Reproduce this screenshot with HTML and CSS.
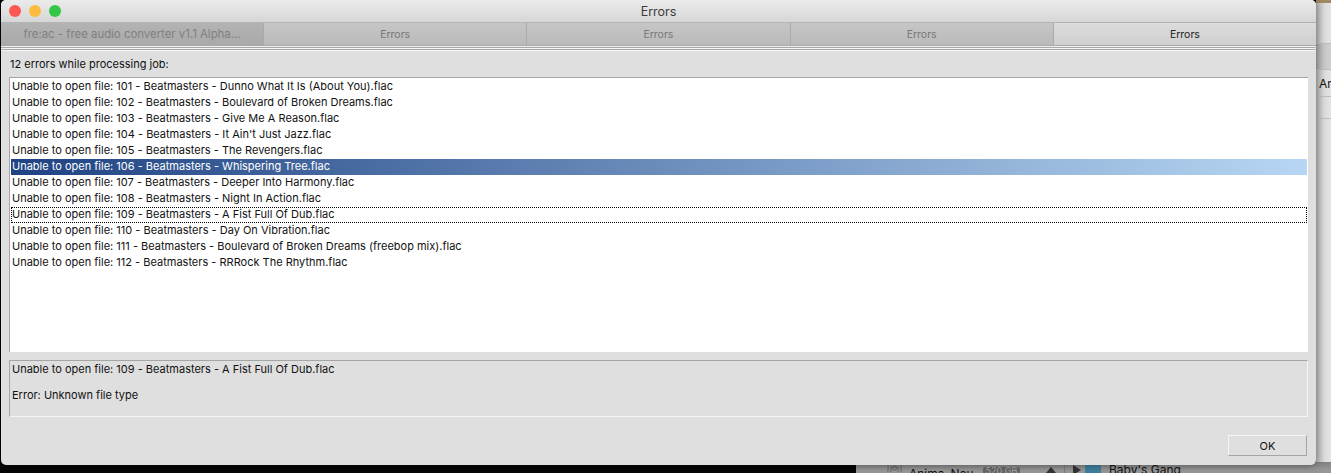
FILE: index.html
```html
<!DOCTYPE html>
<html lang="en">
<head>
<meta charset="utf-8">
<title>Errors</title>
<link rel="stylesheet" href="styles.css">
</head>
<body>
<div class="desktop">
  <div class="side-top"></div>
  <div class="side-row r1"></div>
  <div class="side-row r2"></div>
  <div class="side-row r3"><span>An</span></div>
  <div class="side-row r4"></div>
  <div class="side-row r5"></div>
  <div class="below">
    <svg class="disk" width="15" height="10" viewBox="0 0 15 10"><path d="M1 9V1h13v8M4 9V4h7v5" fill="none" stroke="#666" stroke-width="1"/><circle cx="7.500" cy="5" r="2" fill="none" stroke="#666"/></svg>
    <span class="b-name">Anima_Neu</span>
    <span class="b-size">520 GB</span>
    <span class="b-up"></span>
    <span class="b-sep"></span>
    <span class="b-play"></span>
    <span class="b-folder"></span>
    <span class="b-name2">Baby's Gang</span>
  </div>
</div>
<div class="window">
  <div class="titlebar">
    <div class="lights"><span class="light red"></span><span class="light yellow"></span><span class="light green"></span></div>
    <div class="title">Errors</div>
  </div>
  <div class="tabs">
    <div class="tab first">fre:ac - free audio converter v1.1 Alpha...</div>
    <div class="tab">Errors</div>
    <div class="tab">Errors</div>
    <div class="tab">Errors</div>
    <div class="tab active">Errors</div>
  </div>
  <div class="rule"></div>
  <div class="content">
    <div class="summary">12 errors while processing job:</div>
    <div class="list">
      <div class="row">Unable to open file: 101 - Beatmasters - Dunno What It Is (About You).flac</div>
      <div class="row">Unable to open file: 102 - Beatmasters - Boulevard of Broken Dreams.flac</div>
      <div class="row">Unable to open file: 103 - Beatmasters - Give Me A Reason.flac</div>
      <div class="row">Unable to open file: 104 - Beatmasters - It Ain't Just Jazz.flac</div>
      <div class="row">Unable to open file: 105 - Beatmasters - The Revengers.flac</div>
      <div class="row selected">Unable to open file: 106 - Beatmasters - Whispering Tree.flac</div>
      <div class="row">Unable to open file: 107 - Beatmasters - Deeper Into Harmony.flac</div>
      <div class="row">Unable to open file: 108 - Beatmasters - Night In Action.flac</div>
      <div class="row focused">Unable to open file: 109 - Beatmasters - A Fist Full Of Dub.flac</div>
      <div class="row">Unable to open file: 110 - Beatmasters - Day On Vibration.flac</div>
      <div class="row">Unable to open file: 111 - Beatmasters - Boulevard of Broken Dreams (freebop mix).flac</div>
      <div class="row">Unable to open file: 112 - Beatmasters - RRRock The Rhythm.flac</div>
    </div>
    <div class="details">
      <div>Unable to open file: 109 - Beatmasters - A Fist Full Of Dub.flac</div>
      <div class="details-error">Error: Unknown file type</div>
    </div>
    <div class="actions"><button class="ok">OK</button></div>
  </div>
</div>
</body>
</html>
```

FILE: styles.css
```css
* { box-sizing: border-box; }
html, body { margin: 0; height: 473px; overflow: hidden; }
body {
  background: #050505;
  padding-left: 1px;
  font-family: "Inter", "Liberation Sans", sans-serif;
  font-size: 11px;
  color: #111;
  position: relative;
}
.desktop { position: absolute; inset: 0; }
.side-top { position: absolute; left: 1316px; top: 0; width: 15px; height: 3px; background: #a08a64; }
.side-row {
  position: absolute;
  left: 1316px;
  width: 15px;
  background: linear-gradient(90deg, #b5b5b5, #dcdcdc 9px, #e4e4e4);
  border-bottom: 1px solid #bdbdbd;
  overflow: hidden;
  font-size: 12px;
  color: #111;
}
.side-row span { position: absolute; left: 3px; top: 6px; white-space: nowrap; }
.r1 { top: 3px; height: 41px; }
.r2 { top: 44px; height: 26px; background: linear-gradient(90deg, #a8a8a8, #c8c8c8 9px, #d0d0d0); }
.r3 { top: 70px; height: 27px; }
.r4 { top: 97px; height: 22px; }
.r5 { top: 119px; height: 354px; border-bottom: 0; }
.below {
  position: absolute;
  left: 856px;
  right: 0;
  top: 462px;
  height: 11px;
  background: linear-gradient(#808080, #979797 8px);
  overflow: hidden;
}
.below > * { position: absolute; }
.disk { left: 31px; top: 1px; }
.b-name { left: 53px; top: 4px; font-size: 12px; color: #111; white-space: nowrap; }
.b-size { left: 127px; top: 5px; width: 37px; height: 12px; background: #666; border-radius: 3px; color: #aaa; font-size: 9px; text-align: center; line-height: 8px; }
.b-up { left: 190px; top: 5px; border: 5px solid transparent; border-top: 0; border-bottom: 6px solid #333; }
.b-sep { left: 208px; top: 0; width: 1px; height: 11px; background: #7a7a7a; }
.b-play { left: 217px; top: 3px; border: 5px solid transparent; border-right: 0; border-left: 8px solid #333; }
.b-folder { left: 229px; top: 3px; width: 16px; height: 8px; background: #3f7f9f; }
.b-name2 { left: 253px; top: 0; font-size: 12px; color: #111; white-space: nowrap; }
.window {
  position: relative;
  width: 1315px;
  height: 465px;
  background: #dfdfdf;
  border-radius: 5px;
  overflow: hidden;
  display: flex;
  flex-direction: column;
  box-shadow: 0 0 9px rgba(0,0,0,.4);
}
.titlebar {
  height: 22px;
  background: linear-gradient(#ebebeb, #d6d6d6);
  display: flex;
  align-items: center;
  position: relative;
  flex: none;
}
.lights { display: flex; gap: 8px; padding-left: 8px; }
.light { width: 12px; height: 12px; border-radius: 50%; }
.red { background: #fc5753; }
.yellow { background: #fdbc40; }
.green { background: #33c748; }
.title {
  position: absolute;
  left: 0; right: 0;
  text-align: center;
  font-size: 12.5px;
  color: #3c3c3c;
}
.tabs {
  height: 24px;
  display: flex;
  flex: none;
  border-top: 1px solid #b3b3b3;
  border-bottom: 1px solid #aaa;
  font-size: 10.5px;
}
.tab {
  flex: 1;
  background: linear-gradient(#c6c6c6, #bababa);
  border-left: 1px solid #aaa;
  display: flex;
  align-items: center;
  justify-content: center;
  color: #777;
  white-space: nowrap;
}
.tab.first { flex: none; width: 262px; border-left: 0; background: linear-gradient(#b3b3b3, #a9a9a9); color: #808080; font-size: 11.400px; }
.tab.active { background: linear-gradient(#dcdcdc, #cfcfcf); color: #222; }
.rule {
  height: 5px;
  flex: none;
  margin-right: 1px;
  background: linear-gradient(#efefef 0 1px, #a8a8a8 1px 2px, #f4f4f4 2px 3px, #a8a8a8 3px 4px, #f4f4f4 4px 5px);
}
.content {
  flex: 1;
  display: flex;
  flex-direction: column;
  padding: 6px 8px 9px 8px;
  min-height: 0;
}
.summary { height: 20px; line-height: 14px; padding-left: 1px; }
.list {
  height: 275px;
  flex: none;
  background: #fff;
  border-top: 1px solid #a5a5a5;
  border-left: 1px solid #a5a5a5;
  padding: 1px 1px 0 1px;
}
.row {
  height: 16px;
  line-height: 14px;
  padding-left: 1px;
  white-space: nowrap;
}
.row.selected {
  background: linear-gradient(90deg, #1f4383, #b7d6f3);
  color: #fff;
}
.row.focused { outline: 1px dotted #000; outline-offset: -1px; }
.details {
  height: 57px;
  flex: none;
  margin-top: 8px;
  border: 1px solid;
  border-color: #a5a5a5 #f4f4f4 #f4f4f4 #a5a5a5;
  padding: 0 2px;
  line-height: 16px;
}
.details-error { margin-top: 10px; }
.actions { flex: 1; display: flex; justify-content: flex-end; align-items: flex-end; padding-right: 1px; }
.ok {
  width: 79px;
  height: 21px;
  background: #dfdfdf;
  border: 1px solid;
  border-color: #f4f4f4 #a5a5a5 #a5a5a5 #f4f4f4;
  font: inherit;
  color: #111;
  padding: 0;
}
```
